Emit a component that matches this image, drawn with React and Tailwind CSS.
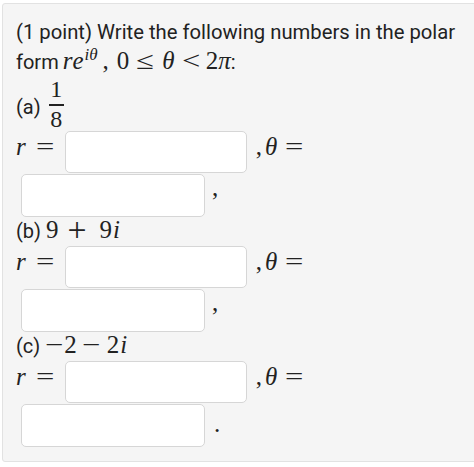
import React from "react";

function Mx({ className = "", it, children }) {
  return (
    <span
      className={`[font-family:Liberation_Serif,serif] text-[25px] leading-[25px] ${it ? "italic" : ""} ${className}`}
    >
      {children}
    </span>
  );
}

function Op({ className = "", sc = "scale-x-[1.3]", children }) {
  return (
    <span
      className={`[font-family:Liberation_Serif,serif] text-[25px] leading-[25px] inline-block text-center ${className}`}
    >
      <span className={`inline-block ${sc}`}>{children}</span>
    </span>
  );
}

function Box({ wide }) {
  return (
    <div
      className={
        wide
          ? "w-[184px] h-[43px] bg-white border border-[#d6d6d6] rounded-[5px] shrink-0"
          : "w-[182px] h-[42px] bg-white border border-[#d6d6d6] rounded-[5px] shrink-0"
      }
    />
  );
}

function Rows({ last }) {
  return (
    <>
      <div className="flex items-start h-[43px]">
        <Mx it className="mt-[3px]">r</Mx>
        <Op className="ml-[10px] w-[18px] mt-[3px]">=</Op>
        <div className="ml-[11px]">
          <Box />
        </div>
        <Mx className="ml-[9px] mt-[3px]">,</Mx>
        <Mx it className="ml-[3px] mt-[3px]">θ</Mx>
        <Op className="ml-[8px] w-[18px] mt-[3px]">=</Op>
      </div>
      <div className="flex items-start h-[43px] pl-[5px]">
        <Box wide />
        {last ? (
          <Mx className="ml-[9px] mt-[7px]">.</Mx>
        ) : (
          <Mx className="ml-[7px] mt-[1px]">,</Mx>
        )}
      </div>
    </>
  );
}

export default function App() {
  return (
    <div className="min-h-screen bg-white overflow-hidden">
      <div className="ml-[2px] mt-[3px] w-[490px] h-[459px] border border-[#e2e2e2] rounded-[3px] bg-[#f5f5f5] pl-[13px] pt-[13px] text-[#222] [font-family:Roboto,sans-serif] text-[20px]">
        <div className="h-[31px] leading-[31px] text-[20.25px] whitespace-nowrap">
          (1 point) Write the following numbers in the polar
        </div>
        <div className="h-[29px] leading-[29px] flex items-baseline whitespace-nowrap">
          <span>form</span>
          <Mx it className="ml-[4px]">r</Mx>
          <Mx it>e</Mx>
          <span className="[font-family:Liberation_Serif,serif] italic text-[17px] leading-[17px] ml-[1px] relative -top-[9px]">
            iθ
          </span>
          <Mx className="ml-[5px]">,</Mx>
          <Mx className="ml-[8px]">0</Mx>
          <Op className="ml-[7px] w-[18px]">≤</Op>
          <Mx it className="ml-[8px]">θ</Mx>
          <Op className="ml-[8px] w-[16px]">&lt;</Op>
          <Mx className="ml-[7px]">2</Mx>
          <Mx it>π</Mx>
          <span>:</span>
        </div>
        <div className="flex items-start h-[54px]">
          <span className="leading-[20px] mt-[20px]">(a)</span>
          <span className="ml-[8px] w-[15px] pt-[1px] flex flex-col items-center [font-family:Liberation_Serif,serif] text-[24px]">
            <span className="leading-[22px] h-[22px]">1</span>
            <span className="block w-[15px] h-[1.5px] bg-[#222] mt-[4px]" />
            <span className="leading-[22px] h-[22px] mt-[2px]">8</span>
          </span>
        </div>
        <Rows />
        <div className="flex items-baseline h-[29px] leading-[29px]">
          <span>(b)</span>
          <Mx className="ml-[5px]">9</Mx>
          <Op className="ml-[9px] w-[20px]" sc="scale-[1.35]">+</Op>
          <Mx className="ml-[12px]">9</Mx>
          <Mx it className="ml-[1px]">i</Mx>
        </div>
        <Rows />
        <div className="flex items-baseline h-[29px] leading-[29px]">
          <span>(c)</span>
          <Op className="ml-[6px] w-[16px]">−</Op>
          <Mx className="ml-[2px]">2</Mx>
          <Op className="ml-[6px] w-[17px]">−</Op>
          <Mx className="ml-[7px]">2</Mx>
          <Mx it className="ml-[1px]">i</Mx>
        </div>
        <Rows last />
      </div>
    </div>
  );
}
